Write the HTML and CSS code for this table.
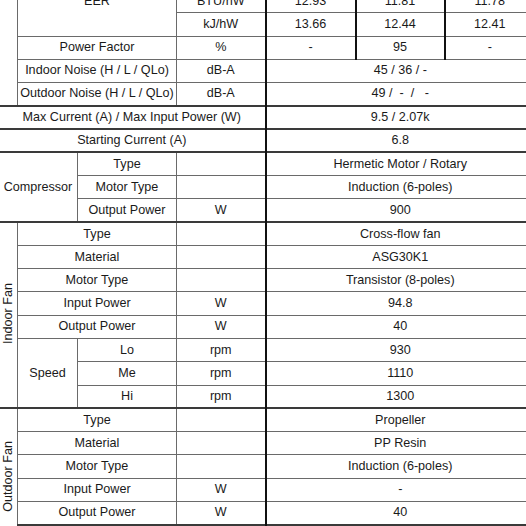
FILE: index.html
```html
<!DOCTYPE html>
<html>
<head>
<meta charset="utf-8">
<link rel="stylesheet" href="styles.css">
</head>
<body>
<div class="sheet">
<table class="spec">
  <colgroup>
    <col class="c0"><col class="c1"><col class="c2"><col class="c3"><col class="c4"><col class="c5"><col class="c6">
  </colgroup>
  <tbody>
    <tr>
      <td rowspan="6"></td>
      <td colspan="2" rowspan="3">EER</td>
      <td>W/W</td>
      <td class="v">3.79</td>
      <td class="v">3.46</td>
      <td class="v">3.45</td>
    </tr>
    <tr>
      <td>BTU/hW</td>
      <td class="v">12.93</td>
      <td class="v">11.81</td>
      <td class="v">11.78</td>
    </tr>
    <tr>
      <td>kJ/hW</td>
      <td class="v">13.66</td>
      <td class="v">12.44</td>
      <td class="v">12.41</td>
    </tr>
    <tr>
      <td colspan="2">Power Factor</td>
      <td>%</td>
      <td class="v">-</td>
      <td class="v">95</td>
      <td class="v">-</td>
    </tr>
    <tr>
      <td colspan="2">Indoor Noise (H / L / QLo)</td>
      <td>dB-A</td>
      <td class="v" colspan="3">45 / 36 / -</td>
    </tr>
    <tr>
      <td colspan="2">Outdoor Noise (H / L / QLo)</td>
      <td>dB-A</td>
      <td class="v" colspan="3">49 /&nbsp;&nbsp;-&nbsp;&nbsp;/&nbsp;&nbsp;&nbsp;-</td>
    </tr>
    <tr class="sep">
      <td colspan="4">Max Current (A) / Max Input Power (W)</td>
      <td class="v" colspan="3">9.5 / 2.07k</td>
    </tr>
    <tr class="sep">
      <td colspan="4">Starting Current (A)</td>
      <td class="v" colspan="3">6.8</td>
    </tr>
    <tr class="sep">
      <td colspan="2" rowspan="3">Compressor</td>
      <td>Type</td>
      <td></td>
      <td class="v" colspan="3">Hermetic Motor / Rotary</td>
    </tr>
    <tr>
      <td>Motor Type</td>
      <td></td>
      <td class="v" colspan="3">Induction (6-poles)</td>
    </tr>
    <tr>
      <td>Output Power</td>
      <td>W</td>
      <td class="v" colspan="3">900</td>
    </tr>
    <tr class="sep">
      <td rowspan="8" class="group"><span class="vt">Indoor Fan</span></td>
      <td colspan="2">Type</td>
      <td></td>
      <td class="v" colspan="3">Cross-flow fan</td>
    </tr>
    <tr>
      <td colspan="2">Material</td>
      <td></td>
      <td class="v" colspan="3">ASG30K1</td>
    </tr>
    <tr>
      <td colspan="2">Motor Type</td>
      <td></td>
      <td class="v" colspan="3">Transistor (8-poles)</td>
    </tr>
    <tr>
      <td colspan="2">Input Power</td>
      <td>W</td>
      <td class="v" colspan="3">94.8</td>
    </tr>
    <tr>
      <td colspan="2">Output Power</td>
      <td>W</td>
      <td class="v" colspan="3">40</td>
    </tr>
    <tr>
      <td rowspan="3">Speed</td>
      <td>Lo</td>
      <td>rpm</td>
      <td class="v" colspan="3">930</td>
    </tr>
    <tr>
      <td>Me</td>
      <td>rpm</td>
      <td class="v" colspan="3">1110</td>
    </tr>
    <tr>
      <td>Hi</td>
      <td>rpm</td>
      <td class="v" colspan="3">1300</td>
    </tr>
    <tr class="sep">
      <td rowspan="6" class="group"><span class="vt">Outdoor Fan</span></td>
      <td colspan="2">Type</td>
      <td></td>
      <td class="v" colspan="3">Propeller</td>
    </tr>
    <tr>
      <td colspan="2">Material</td>
      <td></td>
      <td class="v" colspan="3">PP Resin</td>
    </tr>
    <tr>
      <td colspan="2">Motor Type</td>
      <td></td>
      <td class="v" colspan="3">Induction (6-poles)</td>
    </tr>
    <tr>
      <td colspan="2">Input Power</td>
      <td>W</td>
      <td class="v" colspan="3">-</td>
    </tr>
    <tr>
      <td colspan="2">Output Power</td>
      <td>W</td>
      <td class="v" colspan="3">40</td>
    </tr>
    <tr class="sep">
      <td>Speed</td>
      <td>Lo</td>
      <td>rpm</td>
      <td class="v" colspan="3">-</td>
    </tr>
  </tbody>
</table>
</div>
</body>
</html>
```

FILE: styles.css
```css
html, body {
  margin: 0;
  padding: 0;
  background: #ffffff;
}

.sheet {
  width: 526px;
  height: 526px;
  overflow: hidden;
  background: #ffffff;
}

.spec {
  table-layout: fixed;
  border-collapse: collapse;
  width: 536px;
  margin-top: -34.27px;
  margin-left: -2px;
  font-family: "Liberation Sans", Arial, sans-serif;
  font-size: 12.6px;
  color: #1a1a1a;
}

.c0 { width: 19px; }
.c1 { width: 60px; }
.c2 { width: 99px; }
.c3 { width: 89px; }
.c4 { width: 90px; }
.c5 { width: 89px; }
.c6 { width: 90px; }

.spec tr {
  height: 23.27px;
}

.spec td {
  border: 1px solid #6a6a6a;
  padding: 0;
  text-align: center;
  vertical-align: middle;
  white-space: nowrap;
  line-height: 15px;
}

.spec tr.sep > td {
  border-top: 2px solid #3a3a3a;
}

.spec td.v {
  border-left: 2px solid #111111;
}

.group {
  position: relative;
}

.vt {
  display: inline-block;
  writing-mode: vertical-rl;
  transform: rotate(180deg);
}
```
